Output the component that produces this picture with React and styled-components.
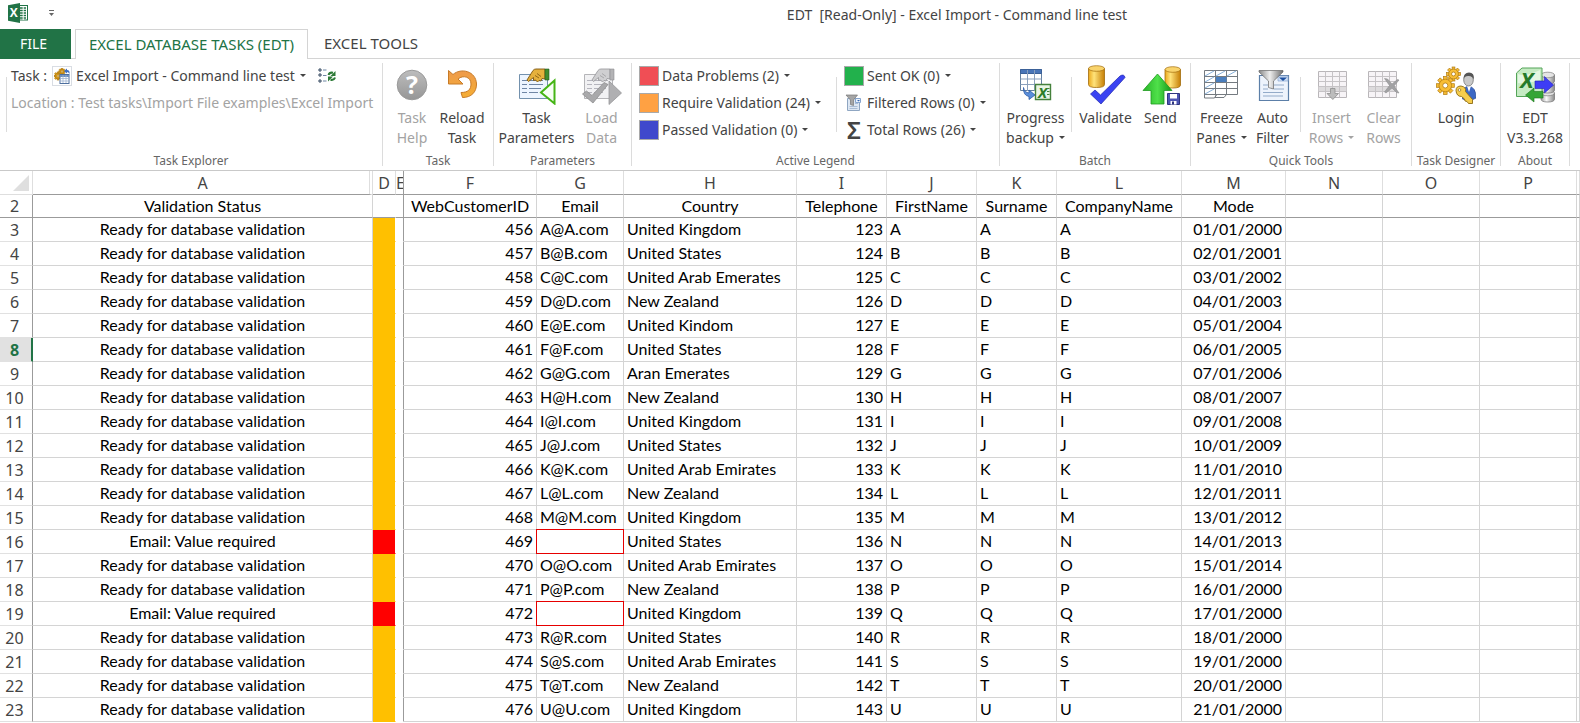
import React from 'react';
import styled, { createGlobalStyle, css } from 'styled-components';

const GlobalStyle = createGlobalStyle`
  * {
    box-sizing: border-box;
  }
  body {
    margin: 0;
    background: #fff;
    color: #444;
    font-family: "Noto Sans", "Open Sans", sans-serif;
    font-size: 14px;
    overflow: hidden;
  }
  button {
    border: 0;
    padding: 0;
    background: none;
    color: inherit;
    font: inherit;
    white-space: nowrap;
  }
  svg {
    display: block;
  }
`;

/* ---------- title bar and tabs ---------- */

const TitleBar = styled.header`
  display: flex;
  height: 29px;
`;

const QuickAccess = styled.div`
  display: flex;
  align-items: center;
  gap: 20px;
  flex: 0 0 334px;
  padding: 0 0 3px 8px;
`;

const Title = styled.h1`
  flex: 1;
  margin: 0;
  font-size: 14px;
  font-weight: normal;
  line-height: 29px;
  text-align: center;
  white-space: pre;
`;

const TabBar = styled.nav`
  display: flex;
  height: 30px;
  box-shadow: inset 0 -1px 0 #d4d4d4;
`;

const FileTab = styled.button`
  width: 71px;
  margin-right: 4px;
  padding: 0 4px 1px 0;
  background: #217346;
  color: #fff;
`;

const Tab = styled.button`
  padding: 0 16px 2px;
  font-size: 15px;
  ${({ $active }) => $active && css`
    padding: 0 13px 2px;
    border: 1px solid #d4d4d4;
    border-bottom: 0;
    background: #fff;
    color: #217346;
  `}
`;

/* ---------- ribbon ---------- */

const RibbonBar = styled.div`
  display: flex;
  height: 112px;
  border-bottom: 1px solid #c9c9c9;
`;

const Group = styled.section`
  display: flex;
  flex-direction: column;
  flex: 0 0 ${({ $width }) => $width}px;
  padding-top: 4px;
`;

const GroupBody = styled.div`
  display: flex;
  flex: 1;
  justify-content: ${({ $start }) => ($start ? 'flex-start' : 'center')};
  padding-left: ${({ $start }) => $start || 0}px;
`;

const GroupLabel = styled.div`
  height: 18px;
  color: #666;
  font-size: 12px;
  line-height: 18px;
  text-align: center;
  white-space: nowrap;
`;

const Divider = styled.div`
  width: 1px;
  height: 103px;
  margin-top: 4px;
  background: #dcdcdc;
`;

const InnerDivider = styled.div`
  width: 1px;
  height: 55px;
  margin: 14px 4px 0;
  background: #dcdcdc;
`;

const TaskDivider = styled(InnerDivider)`
  margin-left: 0;
`;

const LargeButton = styled.button`
  display: flex;
  flex-direction: column;
  align-items: center;
  width: ${({ $width }) => $width}px;
  padding-top: 2px;
  line-height: 20px;
  color: #444;
  &:disabled {
    color: #a3a3a3;
  }
`;

const IconBox = styled.span`
  height: 43px;
`;

const CaretMark = styled.span`
  display: inline-block;
  margin-left: 5px;
  border: 3px solid transparent;
  border-top-color: currentColor;
  border-bottom-width: 0;
  vertical-align: 4px;
`;

const Stack = styled.div`
  width: ${({ $width }) => ($width ? `${$width}px` : 'auto')};
  padding-left: ${({ $indent }) => $indent || 0}px;
`;

const Line = styled.div`
  display: flex;
  align-items: center;
  height: 27px;
  padding-bottom: 2px;
  white-space: nowrap;
`;

const Muted = styled(Line)`
  color: #a3a3a3;
`;

const TaskPicker = styled.button`
  display: flex;
  align-items: center;
  gap: 4px;
  margin: 0 12px 0 5px;
`;

const Framed = styled.span`
  padding: 1px;
  border: 1px solid #d9dde3;
`;

const LegendButton = styled.button`
  display: flex;
  align-items: center;
  gap: 3px;
  height: 27px;
  padding-bottom: 2px;
`;

const Swatch = styled.span`
  width: 20px;
  height: 20px;
  border: 1px solid #a9a9a9;
  background: ${({ $color }) => $color};
`;

const Sigma = styled.span`
  width: 20px;
  font-size: 24px;
  font-weight: 600;
  line-height: 20px;
  text-align: center;
`;

/* ---------- sheet ---------- */

const line = '#d4d4d4';
const darkLine = '#9b9b9b';

const Sheet = styled.table`
  width: 100%;
  table-layout: fixed;
  border-collapse: separate;
  border-spacing: 0;
  color: #000;
  font-family: Lato, sans-serif;
  font-size: 16px;
  font-variant-ligatures: none;
  line-height: 20px;
`;

const Col = styled.col`
  width: ${({ $width }) => ($width ? `${$width}px` : 'auto')};
`;

const ColumnHead = styled.th`
  height: 24px;
  padding: 0;
  border-right: 1px solid #dedede;
  border-bottom: 1px solid ${darkLine};
  color: #444;
  font-family: "Noto Sans", sans-serif;
  font-weight: normal;
  overflow: hidden;
  ${({ $hiddenAfter }) => $hiddenAfter && 'padding-left: 3px; border-right: 4px double #dedede;'}
  ${({ $frozen }) => $frozen && `border-right-color: ${darkLine};`}
`;

const Corner = styled.td`
  padding: 0 3px 0 0;
  border-right: 1px solid #dedede;
  border-bottom: 1px solid #dedede;
`;

const CornerMark = styled.svg`
  margin-left: auto;
`;

const RowHead = styled.th`
  height: ${({ $top }) => ($top ? 23 : 24)}px;
  padding: 0 3px 0 0;
  border-right: 1px solid ${darkLine};
  border-bottom: 1px solid ${({ $top }) => ($top ? darkLine : '#e1e1e1')};
  color: #444;
  font-family: "Noto Sans", sans-serif;
  font-weight: normal;
  ${({ $active }) => $active && css`
    padding-right: 2px;
    border-right: 2px solid #217346;
    background: #e1e1e1;
    color: #217346;
    font-weight: bold;
  `}
`;

const Cell = styled.td`
  padding: 0 3px ${({ $top }) => ($top ? 0 : 2)}px;
  border-right: 1px solid ${line};
  border-bottom: 1px solid ${({ $top }) => ($top ? darkLine : line)};
  text-align: ${({ $align }) => $align || 'left'};
  white-space: nowrap;
`;

const StatusCell = styled(Cell)`
  border-right: 1px solid #fff;
  border-bottom-color: ${({ $color, $top }) => $color || ($top ? darkLine : '#fff')};
  background: ${({ $color }) => $color || '#fff'};
`;

const FreezeCell = styled(Cell)`
  border-right-color: ${darkLine};
  border-bottom-color: ${({ $top }) => ($top ? darkLine : '#fff')};
`;

const ErrorCell = styled(Cell)`
  border-right-color: #e60000;
  border-bottom-color: #e60000;
  box-shadow: -1px 0 0 #e60000, 0 -1px 0 #e60000, -1px -1px 0 #e60000;
`;

/* ---------- icons ---------- */

const Icon = ({ children }) => (
  <svg width="40" height="40" viewBox="0 0 40 40" aria-hidden="true">{children}</svg>
);

const ExcelLogo = () => (
  <svg width="20" height="20" viewBox="0 0 20 20" aria-hidden="true">
    <rect x="11" y="2.5" width="8.5" height="14.5" fill="#fff" stroke="#217346" />
    <path d="M12 5h6M12 7.5h6M12 10h6M12 12.5h6M12 15h6" stroke="#217346" strokeWidth="1.3" />
    <path d="M15.2 3v14" stroke="#fff" />
    <path d="M0 2.2 12 0v20L0 17.8z" fill="#217346" />
    <text x="5.7" y="14.2" fill="#fff" fontSize="12" fontWeight="bold" fontFamily="Open Sans" textAnchor="middle">X</text>
  </svg>
);

const CustomizeIcon = () => (
  <svg width="7" height="7" viewBox="0 0 7 7" aria-hidden="true">
    <path d="M1 .5h5" stroke="#666" />
    <path d="M1 3h5L3.5 6z" fill="#666" />
  </svg>
);

const Gear = ({ cx, cy, r, color = '#f0b323', edge = '#b07a10' }) => (
  <g transform={`translate(${cx} ${cy})`}>
    {[0, 45, 90, 135].map((a) => (
      <rect key={a} x={-r * 0.2} y={-r} width={r * 0.4} height={r * 2} fill={color} stroke={edge} strokeWidth=".7" transform={`rotate(${a})`} />
    ))}
    <circle r={r * 0.7} fill={color} stroke={edge} strokeWidth=".7" />
    <circle r={r * 0.28} fill="#fff" stroke={edge} strokeWidth=".8" />
  </g>
);

const TaskIcon = () => (
  <svg width="16" height="16" viewBox="0 0 16 16" aria-hidden="true">
    <Gear cx={4} cy={8} r={4} color="#e0a21a" />
    <Gear cx={8} cy={3.5} r={3.2} color="#e0a21a" />
    <rect x="6" y="6.5" width="9" height="9" fill="#fff" stroke="#4d6f9e" />
    <path d="M6 8h9" stroke="#6d8fc0" strokeWidth="2" />
    <path d="M6 10.5h9M6 13h9M9 7v8M12 7v8" stroke="#9fb4d2" strokeWidth=".8" />
    <path d="M10 3 13 .5V2q3 0 2.500 4-1-2-2.500-2v1.500z" fill="#3f6fc4" />
  </svg>
);

const TaskListIcon = () => (
  <svg width="18" height="16" viewBox="0 0 18 16" aria-hidden="true">
    <path d="M1 1h2v2H1zM1 6h2v2H1zM1 12h2v2H1z" fill="#fff" stroke="#33475f" />
    <path d="M5 2h3.500M5 7.500h3.500M5 13h3.500" stroke="#6f86a3" />
    <path d="M10.500 7q1-3 4.500-2.200" fill="none" stroke="#2c7a36" strokeWidth="2" />
    <path d="M17.500 3v5h-5z" fill="#2c7a36" />
    <path d="M17 9.500q-1 3-4.500 2.200" fill="none" stroke="#2c7a36" strokeWidth="2" />
    <path d="M10 13.500v-5h5z" fill="#2c7a36" />
  </svg>
);

const HelpIcon = () => (
  <Icon>
    <defs>
      <linearGradient id="help" x1="0" y1="0" x2="0" y2="1">
        <stop offset="0" stopColor="#bdbdbd" />
        <stop offset="1" stopColor="#969696" />
      </linearGradient>
    </defs>
    <circle cx="20" cy="20" r="14.8" fill="url(#help)" stroke="#9a9a9a" />
    <text x="20" y="29" fill="#fff" fontSize="25" fontWeight="bold" fontFamily="Open Sans" textAnchor="middle">?</text>
  </Icon>
);

const ReloadIcon = () => (
  <Icon>
    <defs>
      <linearGradient id="reload" x1="0" y1="0" x2="0" y2="1">
        <stop offset="0" stopColor="#ee9a4b" />
        <stop offset="1" stopColor="#f5ae34" />
      </linearGradient>
    </defs>
    <path
      d="M6.500 5.500 11 9.500C19 2.500 34 6 34.500 19c0 8-5 13.500-14 13.500l-1.500-5c7 0 10-3 10-8.500 0-7-7.500-9.500-13-5l5 5H6.500z"
      fill="url(#reload)" stroke="#c77a26" strokeLinejoin="round"
    />
  </Icon>
);

const FormWithHand = ({ gray }) => (
  <>
    <path d="M2.500 9.500h28v24h-28z" fill={gray ? '#f1f1f3' : '#edf5ff'} stroke={gray ? '#b5b5b8' : '#7391ad'} />
    <path d="M5 15.500h5M5 19.500h5M5 23.500h5M5 27.500h5M12 15.500h14M12 19.500h14M12 23.500h12M12 27.500h9" stroke={gray ? '#b5b5bd' : '#6f86a5'} strokeWidth="1.200" />
    <path
      d="M10 15 16 5.500q1-1.500 3-1.500h9v10l-3-.5-1 2.500-2-.5-1.500 1.500-2-2-2 .5v-3l-5 4z"
      fill={gray ? '#cfcfd1' : '#e5b13c'} stroke={gray ? '#9d9da0' : '#7d560d'} strokeWidth=".9" strokeLinejoin="round"
    />
    <path d="M18 10.500 22 13M20 8.500l4 3" stroke={gray ? '#9d9da0' : '#7d560d'} strokeWidth=".8" />
    <path d="M28 4h4v11h-4z" fill={gray ? '#b3b3b5' : '#3f8d2f'} stroke={gray ? '#8f8f92' : '#245c1d'} strokeWidth=".6" />
  </>
);

const ParametersIcon = () => (
  <Icon>
    <FormWithHand />
    <path d="M37.500 15.500v23L24 27.500z" fill="#f7fff4" stroke="#46b516" strokeWidth="2" />
  </Icon>
);

const LoadIcon = () => (
  <Icon>
    <FormWithHand gray />
    <path d="m.5 29 4-3 5.500 4.500L22 17.500l4 2L11 38z" fill="#a9a9ab" stroke="#8f8f91" strokeWidth=".8" />
    <path d="M27 16v23.500L39.500 28z" fill="#b0b0b2" stroke="#979799" strokeWidth=".8" />
  </Icon>
);

const ProgressIcon = () => (
  <Icon>
    <path d="M4.500 4.500h21v21h-21z" fill="#fff" stroke="#64809f" />
    <path d="M4.500 4.500h21v4h-21z" fill="#4a76b8" stroke="#3b6198" />
    <path d="M4.500 14h21M4.500 19.500h21M11.500 5v21M18.500 5v21" stroke="#8ba1bd" />
    <path d="M7.500 22.500q1 5 5.500 5.500v-3l6 5-6 4.500v-3q-6-1-5.500-9z" fill="#5a8fdb" stroke="#2c5aa5" strokeWidth=".8" />
    <path d="M19.500 19.500h15v15h-15z" fill="#e9f5e5" stroke="#45813c" strokeWidth="1.400" />
    <text x="26.500" y="32.500" fill="#2c7d29" fontSize="15" fontWeight="bold" fontStyle="italic" fontFamily="Open Sans" textAnchor="middle">X</text>
    <path d="M31 23.500h2.500M31 26.500h2.500M31 29.500h2.500" stroke="#45813c" />
  </Icon>
);

const Cylinder = ({ x, y, w, h, silver }) => {
  const fill = silver ? 'url(#silver)' : 'url(#gold)';
  const edge = silver ? '#7b7b7b' : '#a26c0c';
  return (
    <g transform={`translate(${x} ${y})`}>
      <defs>
        <linearGradient id="gold">
          <stop offset="0" stopColor="#eba81c" />
          <stop offset=".35" stopColor="#ffe37a" />
          <stop offset="1" stopColor="#c67f06" />
        </linearGradient>
        <linearGradient id="silver">
          <stop offset="0" stopColor="#9b9b9b" />
          <stop offset=".4" stopColor="#fafafa" />
          <stop offset="1" stopColor="#8a8a8a" />
        </linearGradient>
      </defs>
      <path d={`M0 3v${h - 6}q0 3 ${w / 2} 3t${w / 2}-3V3z`} fill={fill} stroke={edge} strokeWidth=".8" />
      <ellipse cx={w / 2} cy="3" rx={w / 2} ry="2.800" fill={silver ? '#e4e4e4' : '#f9d46c'} stroke={edge} strokeWidth=".7" />
    </g>
  );
};

const ValidateIcon = () => (
  <Icon>
    <Cylinder x={2.5} y={0.5} w={16} h={22} />
    <path d="m4.500 29 4.500-4 5.500 5L34 11q4-2.500 5 1.500L15 39z" fill="#3a43f2" stroke="#2026ae" strokeWidth=".7" strokeLinejoin="round" />
  </Icon>
);

const SendIcon = () => (
  <Icon>
    <defs>
      <linearGradient id="send">
        <stop offset="0" stopColor="#28b328" />
        <stop offset=".5" stopColor="#4fe04a" />
        <stop offset="1" stopColor="#179517" />
      </linearGradient>
    </defs>
    <Cylinder x={24} y={1.5} w={15.5} h={21.5} />
    <path d="M16.500 9 31 25.500h-8V39H10V25.500H2z" fill="url(#send)" stroke="#1e9a1e" strokeWidth=".8" />
    <path d="M26.500 28.500h12v11h-12z" fill="#4d55b3" stroke="#2f3680" />
    <path d="M29 29h7v4.500h-7zM29.500 36h6v3.500h-6z" fill="#fff" />
    <path d="M31 36.500h2v3h-2z" fill="#2f3680" />
  </Icon>
);

const FreezeIcon = () => (
  <Icon>
    <path d="M2.500 5.500h33v24h-11l-2.500 3h-9l1.500-3-2 3.500H2.500z" fill="#fff" stroke="#747a80" />
    <path d="M2.500 11.500h33M2.500 17.500h33M2.500 23.500h33M2.500 29.500h22M13.500 5v25M24.500 5v25" stroke="#747a80" />
    <path d="M14 12h10.500v5H14z" fill="#4a7ebd" />
    <path d="m3 11 9-5M14 11l9-5M25 11l9-5M3 17l9-5M3 23l9-5M3 29l9-5" stroke="#85afd9" />
  </Icon>
);

const FilterIcon = () => (
  <Icon>
    <path d="M6.500 10.500h29v25h-29z" fill="#edf3fc" stroke="#5c7fa8" strokeWidth="1.200" />
    <path d="M25 11h10v5H25z" fill="#cfe0f7" stroke="#8aa7cf" strokeWidth=".7" />
    <path d="M26 12.500h8L30 16z" fill="#1c4fa0" />
    <path d="M10 20h5M10 24h5M10 27.500h20M10 31h20M21 20h10M21 24h10" stroke="#93abc9" />
    <defs>
      <linearGradient id="funnel">
        <stop offset="0" stopColor="#888" />
        <stop offset=".45" stopColor="#eee" />
        <stop offset="1" stopColor="#6e6e6e" />
      </linearGradient>
    </defs>
    <path d="M6 5.500h24v1.500l-9.500 9V24l-5-1.500V16L6 7z" fill="url(#funnel)" stroke="#666" strokeWidth=".7" />
  </Icon>
);

const GrayGrid = ({ x }) => (
  <g transform={`translate(${x} 6)`}>
    <path d="M.5.5h28v26H.5z" fill="#f7f4f7" stroke="#b9b6b9" />
    <path d="M.5 15.500h28v5H.5z" fill="#dddbdd" />
    <path d="M.5 5.500h28M.5 10.500h28M.5 15.500h28M.5 20.500h28M7.500.5v26M14.500.5v26M21.500.5v26" stroke="#c6c3c6" />
  </g>
);

const InsertIcon = () => (
  <Icon>
    <GrayGrid x={6} />
    <path d="M18.500 23.500h4.500v5h3.500l-5.700 6-5.800-6h3.500z" fill="#bcbcbc" stroke="#8f8f8f" strokeWidth=".8" />
  </Icon>
);

const ClearIcon = () => (
  <Icon>
    <GrayGrid x={4} />
    <path d="m20.500 13.500 3 .5 4.500 5 5.500-4.500 1.500.5-5 6 5 7-2.500-.5-4.500-4.500-6 5-1.500-1 5-6.500z" fill="#a2a2a4" stroke="#8e8e90" strokeWidth=".6" />
  </Icon>
);

const LoginIcon = () => (
  <Icon>
    <Gear cx={17.500} cy={9} r={7} color="#f7bd35" />
    <Gear cx={9.300} cy={20.500} r={9} color="#f7bd35" />
    <path d="M26.500 34q-1-12 6-13 7.500 1 7.500 12-6 4-13.500 1z" fill="#3c68c4" stroke="#2b4b91" strokeWidth=".7" />
    <path d="m31 21 2 6 2-6z" fill="#fff" />
    <ellipse cx="32.500" cy="15" rx="4.800" ry="6" fill="#c9c9c9" stroke="#666" strokeWidth=".7" />
    <path d="M27.500 14q0-6.500 5.500-6.500t5 7q-2-4-6-3.500-3.500 0-4.500 3z" fill="#555" />
    <path d="M20 25.500q0-4.500 5-4.500 5.500 1 4.500 5.500l7 8v4h-4l-1.500-2-2-.5-.5-2-3-2.500q-5 0-5.500-6z" fill="#f6cd4c" stroke="#8d6b13" strokeWidth=".9" strokeLinejoin="round" />
    <circle cx="23.500" cy="25" r="1.300" fill="#fff" stroke="#8d6b13" strokeWidth=".7" />
  </Icon>
);

const EdtIcon = () => (
  <Icon>
    <Cylinder x={26} y={25} w={13.5} h={12} silver />
    <Cylinder x={26} y={16} w={13.5} h={12} silver />
    <Cylinder x={26} y={7} w={13.5} h={12} silver />
    <path d="M7 3h20v28.500H1.500V8z" fill="#c5ebc3" stroke="#54a458" />
    <path d="M3 9q8 3 22-4v10q-12 4-22 3z" fill="#e4f7e2" />
    <text x="12" y="23" fill="#257a2a" fontSize="22" fontWeight="bold" fontStyle="italic" fontFamily="Open Sans" textAnchor="middle">X</text>
    <path d="M20 16h9.500v-4.500L38.500 20l-9 8v-4.500H20z" fill="#3d3df5" stroke="#2424b8" strokeWidth=".6" />
    <path d="M28 26.500h-9V23l-8.500 7 8.500 7v-4h9z" fill="#35a535" stroke="#1c761c" strokeWidth=".6" />
  </Icon>
);

const FilteredRowsIcon = () => (
  <svg width="20" height="20" viewBox="0 0 20 20" aria-hidden="true">
    <path d="M3.500 5.500h12v12h-12z" fill="#dde7f3" stroke="#8fa6c2" />
    <path d="M5.500 13.500h8M5.500 15.500h8M11 10.500h3" stroke="#a9bcd4" />
    <path d="M11.500 5.500h5v4h-5z" fill="#eaf2fc" stroke="#86a5cf" />
    <path d="m13 7 1.500 1.500L16 7z" fill="#3868b0" />
    <path d="M2 2h11.500L9.500 7v5.500l-3-1V7z" fill="#a5a5a5" stroke="#777" strokeWidth=".7" />
  </svg>
);

/* ---------- data ---------- */

const columns = [
  { letter: 'A', width: 340, hiddenAfter: true },
  { letter: 'D', width: 23 },
  { letter: 'E', width: 8, frozen: true },
  { letter: 'F', width: 133, label: 'WebCustomerID' },
  { letter: 'G', width: 87, label: 'Email' },
  { letter: 'H', width: 173, label: 'Country' },
  { letter: 'I', width: 90, label: 'Telephone' },
  { letter: 'J', width: 90, label: 'FirstName' },
  { letter: 'K', width: 80, label: 'Surname' },
  { letter: 'L', width: 125, label: 'CompanyName' },
  { letter: 'M', width: 104, label: 'Mode' },
  { letter: 'N', width: 97 },
  { letter: 'O', width: 97 },
  { letter: 'P', width: 97 },
  { letter: '' },
];

const countries = [
  'United Kingdom', 'United States', 'United Arab Emerates', 'New Zealand', 'United Kindom',
  'United States', 'Aran Emerates', 'New Zealand', 'United Kingdom', 'United States',
  'United Arab Emirates', 'New Zealand', 'United Kingdom', 'United States', 'United Arab Emirates',
  'New Zealand', 'United Kingdom', 'United States', 'United Arab Emirates', 'New Zealand', 'United Kingdom',
];

const years = [
  2000, 2001, 2002, 2003, 2004, 2005, 2006, 2007, 2008, 2009, 2010,
  2011, 2012, 2013, 2014, 2000, 2000, 2000, 2000, 2000, 2000,
];

const rows = countries.map((country, i) => {
  const name = String.fromCharCode(65 + i);
  return {
    number: i + 3,
    id: 456 + i,
    name,
    email: name === 'N' || name === 'Q' ? '' : `${name}@${name}.com`,
    country,
    telephone: 123 + i,
    mode: `${String(i + 1).padStart(2, '0')}/01/${years[i]}`,
  };
});

/* ---------- components ---------- */

const BigButton = ({ icon, lines, width, caret, disabled }) => (
  <LargeButton $width={width} disabled={disabled}>
    <IconBox>{icon}</IconBox>
    {lines.map((text, i) => (
      <span key={text}>
        {text}
        {caret && i === lines.length - 1 && <CaretMark />}
      </span>
    ))}
  </LargeButton>
);

const Legend = ({ color, icon, children }) => (
  <LegendButton>
    {icon || <Swatch $color={color} />}
    <span>{children}<CaretMark /></span>
  </LegendButton>
);

const RibbonGroup = ({ label, width, start, children }) => (
  <>
    <Group $width={width} aria-label={label}>
      <GroupBody $start={start}>{children}</GroupBody>
      <GroupLabel>{label}</GroupLabel>
    </Group>
    <Divider />
  </>
);

function Ribbon() {
  return (
    <RibbonBar>
      <RibbonGroup label="Task Explorer" width={382} start={6}>
        <TaskDivider />
        <Stack>
          <Line>
            Task :
            <TaskPicker>
              <Framed><TaskIcon /></Framed>
              <span>Excel Import - Command line test<CaretMark /></span>
            </TaskPicker>
            <button aria-label="Refresh task list"><TaskListIcon /></button>
          </Line>
          <Muted>Location : Test tasks\Import File examples\Excel Import</Muted>
        </Stack>
      </RibbonGroup>
      <RibbonGroup label="Task" width={110}>
        <BigButton icon={<HelpIcon />} lines={['Task', 'Help']} width={48} disabled />
        <BigButton icon={<ReloadIcon />} lines={['Reload', 'Task']} width={52} />
      </RibbonGroup>
      <RibbonGroup label="Parameters" width={137}>
        <BigButton icon={<ParametersIcon />} lines={['Task', 'Parameters']} width={78} />
        <BigButton icon={<LoadIcon />} lines={['Load', 'Data']} width={52} disabled />
      </RibbonGroup>
      <RibbonGroup label="Active Legend" width={367} start={7}>
        <Stack $width={193}>
          <Legend color="#f04e55">Data Problems (2)</Legend>
          <Legend color="#ffa143">Require Validation (24)</Legend>
          <Legend color="#3f48cc">Passed Validation (0)</Legend>
        </Stack>
        <InnerDivider />
        <Stack $indent={3}>
          <Legend color="#22b14c">Sent OK (0)</Legend>
          <Legend icon={<FilteredRowsIcon />}>Filtered Rows (0)</Legend>
          <Legend icon={<Sigma>Σ</Sigma>}>Total Rows (26)</Legend>
        </Stack>
      </RibbonGroup>
      <RibbonGroup label="Batch" width={190}>
        <BigButton icon={<ProgressIcon />} lines={['Progress', 'backup']} width={62} caret />
        <InnerDivider />
        <BigButton icon={<ValidateIcon />} lines={['Validate']} width={60} />
        <BigButton icon={<SendIcon />} lines={['Send']} width={50} />
      </RibbonGroup>
      <RibbonGroup label="Quick Tools" width={220}>
        <BigButton icon={<FreezeIcon />} lines={['Freeze', 'Panes']} width={56} caret />
        <BigButton icon={<FilterIcon />} lines={['Auto', 'Filter']} width={46} />
        <InnerDivider />
        <BigButton icon={<InsertIcon />} lines={['Insert', 'Rows']} width={54} caret disabled />
        <BigButton icon={<ClearIcon />} lines={['Clear', 'Rows']} width={50} disabled />
      </RibbonGroup>
      <RibbonGroup label="Task Designer" width={88}>
        <BigButton icon={<LoginIcon />} lines={['Login']} width={60} />
      </RibbonGroup>
      <RibbonGroup label="About" width={68}>
        <BigButton icon={<EdtIcon />} lines={['EDT', 'V3.3.268']} width={66} />
      </RibbonGroup>
    </RibbonBar>
  );
}

function Grid() {
  return (
    <Sheet>
      <colgroup>
        <Col $width={33} />
        {columns.map((c) => <Col key={c.letter} $width={c.width} />)}
      </colgroup>
      <thead>
        <tr>
          <Corner>
            <CornerMark width="16" height="16" viewBox="0 0 16 16" aria-hidden="true">
              <path d="M16 0v16H0z" fill="#dfdfdf" />
            </CornerMark>
          </Corner>
          {columns.map((c) => (
            <ColumnHead key={c.letter} scope="col" $hiddenAfter={c.hiddenAfter} $frozen={c.frozen}>
              {c.letter}
            </ColumnHead>
          ))}
        </tr>
      </thead>
      <tbody>
        <tr>
          <RowHead scope="row" $top>2</RowHead>
          <Cell $top $align="center">Validation Status</Cell>
          <StatusCell $top />
          <FreezeCell $top />
          {columns.slice(3).map((c) => (
            <Cell key={c.letter} $top $align="center">{c.label}</Cell>
          ))}
        </tr>
        {rows.map((row) => (
          <tr key={row.number}>
            <RowHead scope="row" $active={row.number === 8}>{row.number}</RowHead>
            <Cell $align="center">
              {row.email ? 'Ready for database validation' : 'Email: Value required'}
            </Cell>
            <StatusCell $color={row.email ? '#ffc000' : '#ff0000'} />
            <FreezeCell />
            <Cell $align="right">{row.id}</Cell>
            {row.email ? <Cell>{row.email}</Cell> : <ErrorCell />}
            <Cell>{row.country}</Cell>
            <Cell $align="right">{row.telephone}</Cell>
            <Cell>{row.name}</Cell>
            <Cell>{row.name}</Cell>
            <Cell>{row.name}</Cell>
            <Cell $align="right">{row.mode}</Cell>
            <Cell />
            <Cell />
            <Cell />
            <Cell />
          </tr>
        ))}
      </tbody>
    </Sheet>
  );
}

function App() {
  return (
    <>
      <GlobalStyle />
      <TitleBar>
        <QuickAccess>
          <ExcelLogo />
          <button aria-label="Customize Quick Access Toolbar"><CustomizeIcon /></button>
        </QuickAccess>
        <Title>{'EDT  [Read-Only] - Excel Import - Command line test'}</Title>
      </TitleBar>
      <TabBar>
        <FileTab>FILE</FileTab>
        <Tab $active>EXCEL DATABASE TASKS (EDT)</Tab>
        <Tab>EXCEL TOOLS</Tab>
      </TabBar>
      <Ribbon />
      <Grid />
    </>
  );
}

export default App;
